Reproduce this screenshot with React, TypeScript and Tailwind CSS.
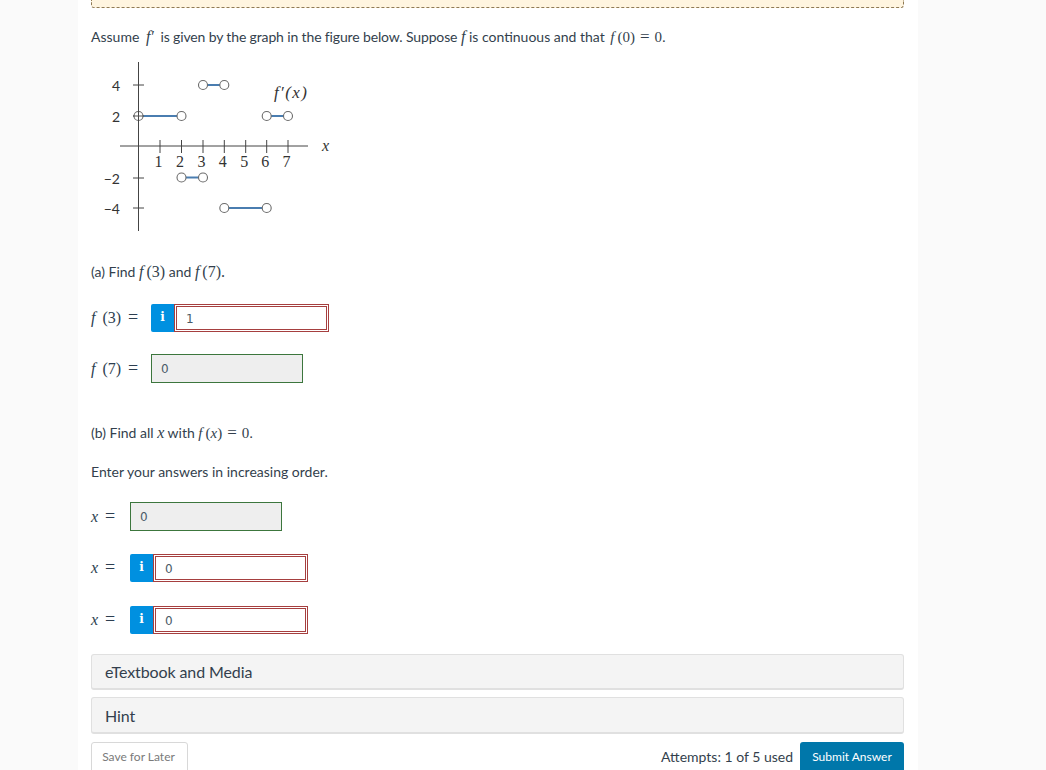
const serif = "font-['Liberation_Serif',serif]";

function Fn() {
  return <i className="pr-[3px]">f</i>;
}

function Eq() {
  return <span className="mx-[5px] text-[17px] leading-none">=</span>;
}

function Math1({ children }: { children: React.ReactNode }) {
  return <span className={`${serif} text-[16px] text-[#2d3e50]`}>{children}</span>;
}

function Info() {
  return (
    <div className="flex h-[28px] w-[23px] items-center justify-center rounded-l-[2px] bg-[#0090e0] pb-[2px] font-['DejaVu_Serif',serif] text-[12px] font-bold text-white">
      i
    </div>
  );
}

function BadInput({ value }: { value: string }) {
  return (
    <div className="box-border flex h-[28px] w-[155px] items-center border-[3px] border-double border-[#a63f3f] bg-white pl-[9px] pt-[1px] font-['DejaVu_Sans',sans-serif] text-[12px] text-[#4a5a68]">
      {value}
    </div>
  );
}

function GoodInput({ value }: { value: string }) {
  return (
    <div className="box-border flex h-[29px] w-[152px] items-center border border-[#3c763d] bg-[#eeeeee] pl-[9px] font-['DejaVu_Sans',sans-serif] text-[12px] text-[#4a5a68]">
      {value}
    </div>
  );
}

function Row({ label, width, className, children }: { label: React.ReactNode; width: string; className: string; children: React.ReactNode }) {
  return (
    <div className={`flex items-center ${className}`}>
      <div className={`${width} shrink-0`}>
        <Math1>{label}</Math1>
      </div>
      {children}
    </div>
  );
}

function Open({ x, y }: { x: number; y: number }) {
  return <circle cx={x} cy={y} r="4.5" fill="white" stroke="#6b6b6b" strokeWidth="1.1" />;
}

function Seg({ a, b, y }: { a: number; b: number; y: number }) {
  return (
    <g>
      <line x1={a} x2={b} y1={y} y2={y} stroke="#4a7db0" strokeWidth="2" />
      <Open x={a} y={y} />
      <Open x={b} y={y} />
    </g>
  );
}

function Graph() {
  const xs = [160, 181.5, 203, 224.3, 245.7, 266.7, 288];
  const ys: [number, string][] = [
    [85, "4"],
    [116, "2"],
    [178, "−2"],
    [208, "−4"],
  ];
  return (
    <svg viewBox="91 55 240 180" className="block h-[180px] w-[240px]">
      <line x1="138.5" x2="138.5" y1="62" y2="231" stroke="#444" strokeWidth="1" />
      <line x1="120" x2="308" y1="146" y2="146" stroke="#444" strokeWidth="1" />
      {xs.map((x, i) => (
        <g key={x}>
          <line x1={x} x2={x} y1="140" y2="153" stroke="#444" strokeWidth="1" />
          <text x={x - 1.5} y="167" textAnchor="middle" fontFamily="Liberation Serif, serif" fontSize="16" fill="#333">
            {i + 1}
          </text>
        </g>
      ))}
      {ys.map(([y, t]) => (
        <g key={t}>
          <line x1="133" x2="144" y1={y} y2={y} stroke="#444" strokeWidth="1" />
          <text x="120" y={y + 6} textAnchor="end" fontFamily="Lato, sans-serif" fontSize="14" fill="#333">
            {t}
          </text>
        </g>
      ))}
      <Seg a={138.5} b={181.5} y={116} />
      <line x1="138.5" x2="138.5" y1="110" y2="122" stroke="#444" strokeWidth="1" />
      <line x1="133" x2="144" y1="116" y2="116" stroke="#555" strokeWidth="1" />
      <Seg a={203} b={224.3} y={85} />
      <Seg a={266.7} b={288} y={116} />
      <Seg a={181.5} b={203} y={177.5} />
      <Seg a={224.3} b={266.7} y={208} />
      <text x="274" y="98" fontFamily="Liberation Serif, serif" fontSize="17" fontStyle="italic" letterSpacing="1.4" fill="#333">
        f′(x)
      </text>
      <text x="322" y="151" fontFamily="Liberation Serif, serif" fontSize="16" fontStyle="italic" fill="#333">
        x
      </text>
    </svg>
  );
}

function Panel({ children, className }: { children: React.ReactNode; className: string }) {
  return (
    <div className={`box-border flex items-center rounded-[3px] border border-b-2 border-[#e0e0e0] bg-[#f4f4f4] pl-[13px] text-[16px] tracking-[-0.1px] text-[#333f4d] ${className}`}>
      {children}
    </div>
  );
}

export default function App() {
  return (
    <div className="h-[770px] overflow-hidden bg-[#fafafa] font-['Lato',sans-serif] text-[14px] text-[#333f4d]">
      <div className="ml-[78px] h-[770px] w-[840px] overflow-hidden bg-white pl-[13px] pr-[14px]">
        <div className="h-[8px] rounded-b-[3px] border border-t-0 border-dashed border-[#8f7a55] bg-[#fff5e0]" />
        <p className="mt-[19px] h-[20px] whitespace-nowrap leading-[20px]">
          Assume{" "}
          <span className={`${serif} mx-[3px] text-[16px] italic`}>f′</span>{" "}
          <span className="tracking-[-0.14px]">is given by the graph in the figure below. Suppose</span>{" "}
          <span className={`${serif} text-[16px] italic`}>f</span> is continuous and that{" "}
          <span className={`${serif} ml-[2px] text-[15px]`}><Fn />(0)<Eq />0.</span>
        </p>
        <div className="mt-[8px]">
          <Graph />
        </div>
        <p className="mt-[27px] h-[20px] leading-[20px]">
          (a) Find <span className={`${serif} text-[16px]`}><Fn />(3)</span> and{" "}
          <span className={`${serif} text-[16px]`}><Fn />(7).</span>
        </p>
        <Row className="mt-[22px]" width="w-[60px]" label={<><Fn /> (3) <span className="ml-[3px] text-[18px] leading-none">=</span></>}>
          <Info />
          <BadInput value="1" />
        </Row>
        <Row className="mt-[22px]" width="w-[60px]" label={<><Fn /> (7) <span className="ml-[3px] text-[18px] leading-none">=</span></>}>
          <GoodInput value="0" />
        </Row>
        <p className="mt-[40px] h-[20px] leading-[20px]">
          (b) Find all <span className={`${serif} text-[16px] italic`}>x</span> with{" "}
          <span className={`${serif} text-[15px]`}><Fn />(<i>x</i>)<Eq />0.</span>
        </p>
        <p className="mt-[19px] h-[20px] leading-[20px]">Enter your answers in increasing order.</p>
        <Row className="mt-[20px]" width="w-[39px]" label={<><i>x</i><span className="ml-[7px] text-[18px] leading-none">=</span></>}>
          <GoodInput value="0" />
        </Row>
        <Row className="mt-[23px]" width="w-[39px]" label={<><i>x</i><span className="ml-[7px] text-[18px] leading-none">=</span></>}>
          <Info />
          <BadInput value="0" />
        </Row>
        <Row className="mt-[24px]" width="w-[39px]" label={<><i>x</i><span className="ml-[7px] text-[18px] leading-none">=</span></>}>
          <Info />
          <BadInput value="0" />
        </Row>
        <Panel className="mt-[20px] h-[36px]">eTextbook and Media</Panel>
        <Panel className="mt-[7px] h-[37px] pt-[1px]">Hint</Panel>
        <div className="mt-[8px] flex items-start justify-between">
          <button className="box-border h-[40px] w-[97px] rounded-[3px] border border-[#d8d8d8] bg-white pb-[10px] pr-[2px] text-[12px] text-[#7a7a7a]">
            Save for Later
          </button>
          <div className="flex items-start">
            <span className="mr-[7px] mt-[6px] text-[14px] leading-[18px] text-[#333f4d]">Attempts: 1 of 5 used</span>
            <button className="h-[40px] w-[104px] rounded-[3px] bg-[#0077aa] pb-[10px] text-[12px] text-white">
              Submit Answer
            </button>
          </div>
        </div>
      </div>
    </div>
  );
}
